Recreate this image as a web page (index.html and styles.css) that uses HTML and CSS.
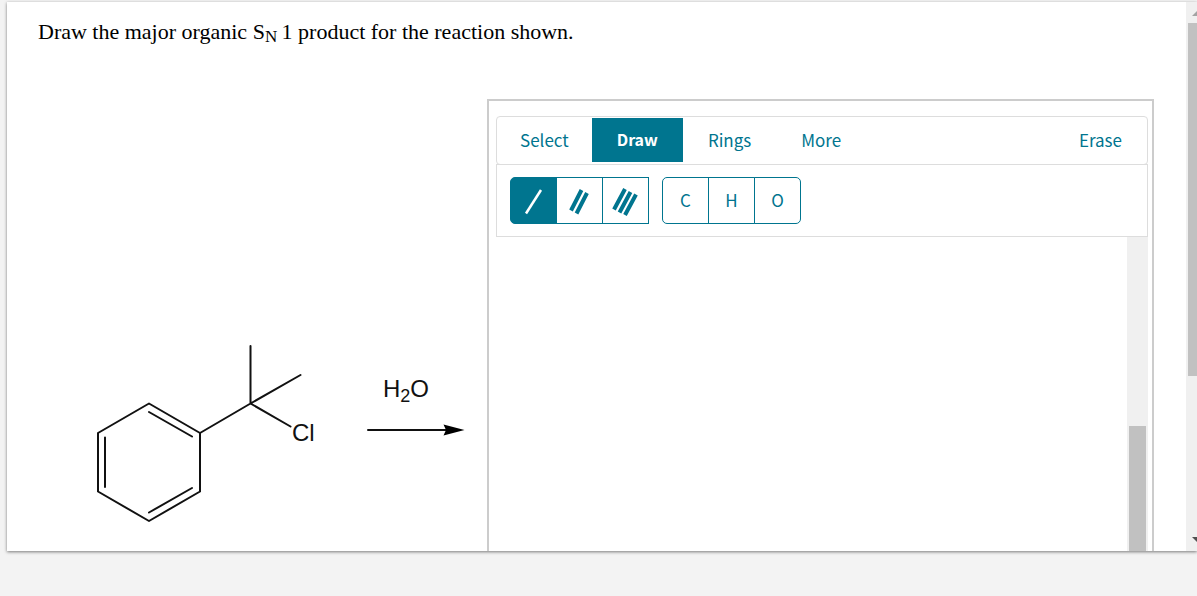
FILE: index.html
```html
<!DOCTYPE html>
<html lang="en">
  <head>
    <meta charset="utf-8">
    <title>Draw the major organic product</title>
    <link rel="stylesheet" href="styles.css">
  </head>
  <body>
    <main class="card">

      <div class="question">
        <p class="prompt">Draw the major organic S<sub>N</sub>&thinsp;1 product for the reaction shown.</p>

        <div class="workspace">
          <div class="reaction">
            <svg class="scheme" width="380" height="190" viewBox="90 338 380 190" role="img" aria-label="Reaction scheme">
              <!-- benzene ring -->
              <path class="bond" d="M149 403.5 L200 433 V491.5 L149 521 L98 491.5 V433 Z"/>
              <path class="bond" d="M149 412 L192 436.500 M105 437.500 V487 M149 512.500 L192 488"/>
              <!-- side chain -->
              <path class="bond" d="M200 433 L250.500 403.500 V346 M250.500 403.500 L300.500 375 M250.500 403.500 L290.500 426.500"/>
              <text class="atom" x="292" y="441">Cl</text>
              <!-- reagent and arrow -->
              <text class="atom" x="383" y="397">H<tspan class="atom-sub" dy="5">2</tspan><tspan dy="-5">O</tspan></text>
              <path class="bond" d="M368 430 H448"/>
              <path d="M464.500 430 L443.500 424.500 L446 430 L443.500 435.500 Z"/>
            </svg>
          </div>

          <div class="editor">
            <nav class="tabs">
              <button type="button" class="tab">Select</button>
              <button type="button" class="tab tab-active">Draw</button>
              <button type="button" class="tab">Rings</button>
              <button type="button" class="tab">More</button>
              <button type="button" class="tab tab-erase">Erase</button>
            </nav>

            <div class="tools">
              <div class="tool-group bonds">
                <button type="button" class="tool tool-active" aria-label="Single bond">
                  <svg width="30" height="30" viewBox="0 0 30 30"><path class="single" d="M7 27.500 L22 4"/></svg>
                </button>
                <button type="button" class="tool" aria-label="Double bond">
                  <svg width="30" height="30" viewBox="0 0 30 30"><path class="multi" d="M6 24.500 L16.500 4 M11.500 27.500 L22 7"/></svg>
                </button>
                <button type="button" class="tool" aria-label="Triple bond">
                  <svg width="30" height="30" viewBox="0 0 30 30"><path class="multi" d="M3 23.500 L14 3 M8.500 26.500 L19.500 6 M14 29 L25 8.500"/></svg>
                </button>
              </div>
              <div class="tool-group atoms">
                <button type="button" class="tool">C</button>
                <button type="button" class="tool">H</button>
                <button type="button" class="tool">O</button>
              </div>
            </div>

            <div class="canvas">
              <div class="canvas-track">
                <div class="canvas-thumb"></div>
              </div>
            </div>
          </div>
        </div>
      </div>

      <div class="page-track">
        <svg class="arrow-up" width="5" height="5" viewBox="0 0 5 5"><path d="M5 0 L0 5 H5 Z"/></svg>
        <div class="page-thumb"></div>
        <svg class="arrow-down" width="5" height="5" viewBox="0 0 5 5"><path d="M0 0 H5 V5 Z"/></svg>
      </div>

    </main>
  </body>
</html>
```

FILE: styles.css
```css
* {
  box-sizing: border-box;
}

body {
  margin: 0;
  padding: 2px 0 45px 7px;
  height: 100vh;
  background-color: #f3f3f3;
  overflow: hidden;
}

.card {
  display: flex;
  height: 100%;
  background-color: #fff;
  box-shadow: 0 1px 3px rgba(0, 0, 0, 0.5);
}

.question {
  flex: 1;
  display: flex;
  flex-direction: column;
  min-width: 0;
  padding: 15px 32px 0 31px;
  overflow: hidden;
}

.prompt {
  margin: 0 0 52px;
  font-family: "Liberation Serif", "Times New Roman", serif;
  font-size: 22px;
  line-height: 30px;
  color: #000;
}

.prompt sub {
  font-size: 17px;
  line-height: 0;
  vertical-align: -3px;
}

.workspace {
  flex: 1;
  display: flex;
  min-height: 0;
}

.reaction {
  flex: 0 0 449px;
  padding: 239px 0 0 52px;
}

.scheme {
  display: block;
}

.bond {
  fill: none;
  stroke: #111;
  stroke-width: 2;
  stroke-linejoin: round;
  stroke-linecap: round;
}

.atom {
  font-family: "Liberation Sans", Arial, sans-serif;
  font-size: 24px;
  fill: #111;
}

.atom-sub {
  font-size: 18px;
}

/* molecule editor */
.editor {
  flex: 1;
  display: flex;
  flex-direction: column;
  min-width: 0;
  padding: 15px 4px 0 7px;
  border: 2px solid #ccc;
  border-bottom: none;
}

.tabs {
  display: flex;
  padding: 1px 0 2px;
  border: 1px solid #ddd;
  border-radius: 4px;
}

.tab {
  height: 44px;
  padding: 0 25px 2px;
  border: none;
  background: none;
  font-family: "Noto Sans CJK SC", "Open Sans", sans-serif;
  font-size: 17px;
  color: #00758f;
  cursor: pointer;
}

.tab:first-child {
  padding: 0 23px 2px;
}

.tab-active {
  background-color: #00758f;
  color: #fff;
  font-size: 16px;
  font-weight: bold;
}

.tab-erase {
  margin-left: auto;
}

.tools {
  display: flex;
  gap: 13px;
  margin-top: -1px;
  padding: 12px 13px;
  border: 1px solid #ddd;
}

.tool-group {
  display: flex;
}

.tool {
  display: flex;
  align-items: center;
  justify-content: center;
  width: 47px;
  height: 47px;
  padding: 0;
  border: 1px solid #00758f;
  background-color: #fff;
  font-family: "Noto Sans CJK SC", "Open Sans", sans-serif;
  font-size: 17px;
  color: #00758f;
  cursor: pointer;
}

.tool + .tool {
  margin-left: -1px;
}

.tool:first-child {
  border-radius: 5px 0 0 5px;
}

.atoms .tool {
  padding-bottom: 2px;
}

.atoms .tool:last-child {
  border-radius: 0 5px 5px 0;
}

.tool-active {
  background-color: #00758f;
  color: #fff;
}

.single {
  stroke: currentColor;
  stroke-width: 2.5;
}

.multi {
  fill: none;
  stroke: currentColor;
  stroke-width: 4;
}

/* scrollbars */
.canvas {
  flex: 1;
  display: flex;
  justify-content: flex-end;
}

.canvas-track {
  width: 21px;
  padding: 189px 2px 0;
  background-color: #f0f0f0;
}

.canvas-thumb {
  height: 100%;
  background-color: #c1c1c1;
}

.page-track {
  display: flex;
  flex-direction: column;
  align-items: flex-end;
  width: 11px;
  padding: 9px 0;
  background-color: #f0f0f0;
}

.page-thumb {
  width: 9px;
  height: calc(100% - 178px);
  margin-top: 7px;
  background-color: #c1c1c1;
}

.arrow-up {
  fill: #a3a3a3;
}

.arrow-down {
  margin-top: auto;
  fill: #505050;
}
```
